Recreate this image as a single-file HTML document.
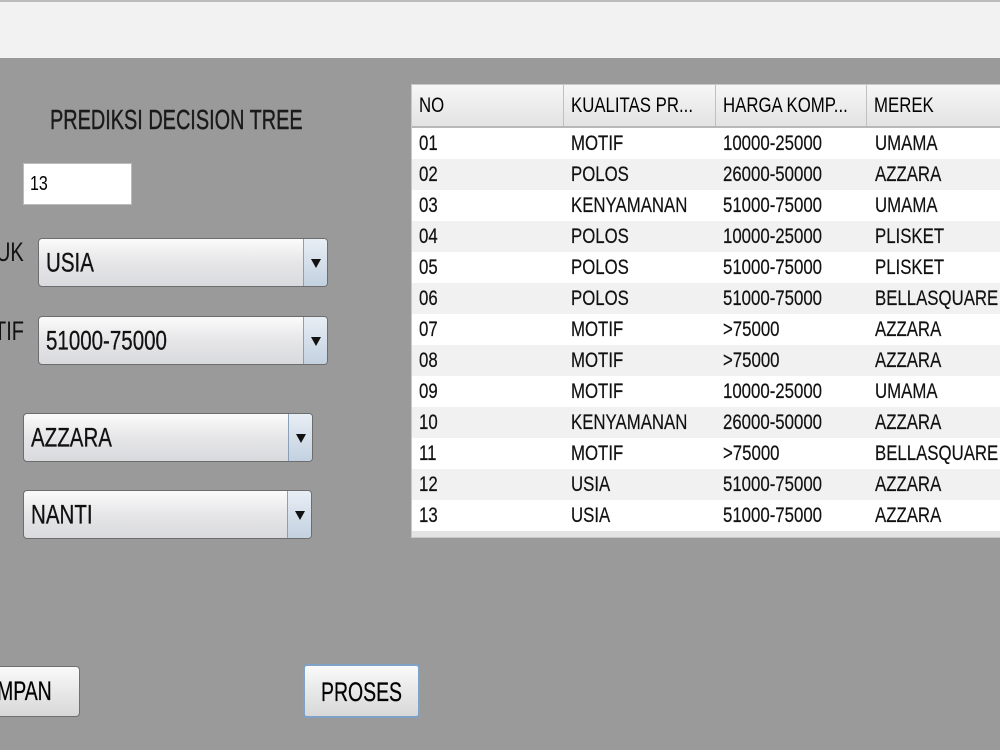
<!DOCTYPE html>
<html><head><style>
body{margin:0;width:1000px;height:750px;overflow:hidden;background:#9a9a9a;position:relative;font-family:"Liberation Sans",sans-serif}
.top{position:absolute;left:0;top:0;width:1000px;height:58px;background:#f2f2f2;border-top:2px solid #bbb;box-sizing:border-box}
.a{position:absolute}
.n{display:inline-block;transform:scaleX(.8);transform-origin:left center;white-space:nowrap}
.combo{position:absolute;border:1px solid #6d6d6d;border-radius:4px;background:linear-gradient(#fbfbfb,#e6e6e8 50%,#d9dadd);box-sizing:border-box}
.combo .t{position:absolute;left:7px;top:50%;transform:translateY(-50%) scaleX(.76);transform-origin:left center;font-size:27px;color:#111;-webkit-text-stroke:0.3px #111}
.combo .b{position:absolute;right:0;top:0;bottom:0;width:23px;border-left:1px solid #8aa0b8;background:linear-gradient(#e8eef5,#c3d1e0);border-radius:0 3px 3px 0}
.combo .b:after{content:"";position:absolute;left:7px;top:50%;margin-top:-4px;border-left:5px solid transparent;border-right:5px solid transparent;border-top:9px solid #111}
.tbl{position:absolute;left:411px;top:84px;width:600px;height:454px;background:#e4e4e4;border:1px solid #c8c8c8;box-sizing:border-box;overflow:hidden}
.hdr{position:absolute;left:0;top:0;height:41px;width:600px;border-bottom:2px solid #b8b8b8;background:linear-gradient(#f6f6f6,#e3e3e3)}
.hc{position:absolute;top:0;height:41px;border-right:1px solid #c0c0c0;box-sizing:border-box;line-height:41px;padding-left:7px;font-size:21px}
.row{position:absolute;left:0;width:600px;height:31px;line-height:31px;font-size:21px;color:#111}
.row span{position:absolute;-webkit-text-stroke:0.2px #111}
.btn{position:absolute;border:1px solid #707070;border-radius:4px;background:linear-gradient(#fafafa,#e8e8e8 50%,#d8d8d8);box-sizing:border-box;font-size:27px;text-align:center}
.btn .n{transform:scaleX(.72);-webkit-text-stroke:0.3px #111}
</style></head><body>
<div class="top"></div>
<div class="a" style="left:50px;top:104px;font-size:28px;color:#1a1a1a"><span class="n" style="transform:scaleX(.71);-webkit-text-stroke:0.4px #1a1a1a">PREDIKSI DECISION TREE</span></div>
<div class="a" style="left:23px;top:163px;width:109px;height:42px;background:#fff;border:1px solid #bbb;box-sizing:border-box"><span class="n" style="position:absolute;left:6px;top:9px;font-size:20px">13</span></div>
<div class="a" style="left:-4px;top:237px;font-size:27px;color:#111"><span class="n" style="transform:scaleX(.74)">UK</span></div>
<div class="a" style="left:-6px;top:316px;font-size:27px;color:#111"><span class="n" style="transform:scaleX(.74)">TIF</span></div>
<div class="combo" style="left:38px;top:238px;width:290px;height:49px"><span class="t">USIA</span><div class="b"></div></div>
<div class="combo" style="left:38px;top:316px;width:290px;height:49px"><span class="t">51000-75000</span><div class="b"></div></div>
<div class="combo" style="left:23px;top:413px;width:290px;height:49px"><span class="t">AZZARA</span><div class="b"></div></div>
<div class="combo" style="left:23px;top:490px;width:289px;height:49px"><span class="t">NANTI</span><div class="b"></div></div>
<div class="btn" style="left:-10px;top:666px;width:90px;height:51px;line-height:49px"><span class="n" style="position:absolute;left:6px">MPAN</span></div>
<div class="btn" style="left:303px;top:664px;width:117px;height:54px;line-height:52px;border:2px solid #7fa3c8"><span class="n" style="position:absolute;left:16px">PROSES</span></div>
<div class="tbl">
<div class="hdr">
<div class="hc" style="left:0;width:152px"><span class="n">NO</span></div>
<div class="hc" style="left:152px;width:152px"><span class="n">KUALITAS PR...</span></div>
<div class="hc" style="left:304px;width:151px"><span class="n">HARGA KOMP...</span></div>
<div class="hc" style="left:455px;width:152px"><span class="n">MEREK</span></div>
</div>
<div id="rows"></div>
</div>
<script>
var d=[["01","MOTIF","10000-25000","UMAMA"],["02","POLOS","26000-50000","AZZARA"],["03","KENYAMANAN","51000-75000","UMAMA"],["04","POLOS","10000-25000","PLISKET"],["05","POLOS","51000-75000","PLISKET"],["06","POLOS","51000-75000","BELLASQUARE"],["07","MOTIF",">75000","AZZARA"],["08","MOTIF",">75000","AZZARA"],["09","MOTIF","10000-25000","UMAMA"],["10","KENYAMANAN","26000-50000","AZZARA"],["11","MOTIF",">75000","BELLASQUARE"],["12","USIA","51000-75000","AZZARA"],["13","USIA","51000-75000","AZZARA"]];
var h="";d.forEach(function(r,i){h+='<div class="row" style="top:'+(43+i*31)+'px;background:'+(i%2?'#f1f1f1':'#fff')+'">';var x=[7,159,311,463];r.forEach(function(c,j){h+='<span class="n" style="left:'+x[j]+'px">'+c.replace(">","&gt;")+'</span>'});h+='</div>'});
document.getElementById("rows").innerHTML=h;
</script>
</body></html>
